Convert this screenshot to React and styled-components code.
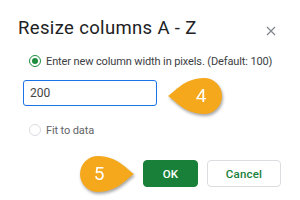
import React from "react";
import styled, { createGlobalStyle } from "styled-components";

const GlobalStyle = createGlobalStyle`
  html, body {
    margin: 0;
    padding: 0;
    background: #fff;
  }
  body {
    font-family: Roboto, "Liberation Sans", Arial, sans-serif;
    -webkit-font-smoothing: antialiased;
  }
`;

// ----- Dialog -----
const Dialog = styled.div`
  position: relative;
  width: 300px;
  height: 200px;
  box-sizing: border-box;
  padding: 16px 19px 0 18px;
  background: #fff;
  overflow: hidden;
`;

const TitleRow = styled.div`
  display: flex;
  align-items: center;
  justify-content: space-between;
  height: 24px;
`;
const Title = styled.h2`
  margin: 0;
  font-size: 18.5px;
  line-height: 24px;
  font-weight: 400;
  color: #202124;
  letter-spacing: 0.35px;
`;
const CloseBtn = styled.button`
  width: 20px;
  height: 20px;
  margin-top: 6px;
  padding: 0;
  border: 0;
  background: transparent;
  display: flex;
  align-items: center;
  justify-content: center;
  color: #5f6368;
  cursor: pointer;
`;

// ----- Options -----
const Options = styled.div`
  display: flex;
  flex-direction: column;
  padding-left: 5px;
  margin-top: 11px;
`;
const OptionRow = styled.label`
  display: flex;
  align-items: center;
  gap: 5px;
  height: 20px;
  padding-left: 6px;
  font-size: 11px;
  letter-spacing: -0.12px;
  color: ${({ muted }) => (muted ? "#5f6368" : "#3c4043")};
  margin-top: ${({ gap }) => gap || 0}px;
`;
const Radio = styled.span`
  box-sizing: border-box;
  width: 12px;
  height: 12px;
  border-radius: 50%;
  border: 1.5px solid ${({ checked }) => (checked ? "#1e8e3e" : "#dadce0")};
  display: flex;
  align-items: center;
  justify-content: center;
  &::after {
    content: "";
    width: 6px;
    height: 6px;
    border-radius: 50%;
    background: ${({ checked }) => (checked ? "#1e8e3e" : "transparent")};
  }
`;
const WidthInput = styled.input`
  box-sizing: border-box;
  width: 134px;
  height: 26px;
  margin-top: 9px;
  padding: 0 6px;
  border: 1.5px solid #1a73e8;
  border-radius: 3px;
  font-family: inherit;
  font-size: 12px;
  color: #444;
  outline: none;
`;

// ----- Buttons -----
const Actions = styled.div`
  display: flex;
  justify-content: flex-end;
  gap: 9px;
  margin-top: 20px;
`;
const Button = styled.button`
  box-sizing: border-box;
  height: 27px;
  width: ${({ w }) => w}px;
  border-radius: 4px;
  font-family: inherit;
  font-size: 11.5px;
  font-weight: 500;
  letter-spacing: 0.2px;
  cursor: pointer;
  border: 1px solid ${({ primary }) => (primary ? "#188038" : "#dadce0")};
  background: ${({ primary }) => (primary ? "#188038" : "#fff")};
  color: ${({ primary }) => (primary ? "#fff" : "#188038")};
`;

// ----- Callouts (annotations drawn over the dialog) -----
const Callout = styled.div`
  position: absolute;
  left: ${({ x }) => x}px;
  top: ${({ y }) => y}px;
  width: 60px;
  height: 40px;
  filter: drop-shadow(1px 2px 1.5px rgba(0, 0, 0, 0.35));
  svg {
    position: absolute;
    inset: 0;
  }
`;
const CalloutNum = styled.span`
  position: absolute;
  top: 0;
  left: ${({ cx }) => cx - 12}px;
  width: 24px;
  height: 40px;
  line-height: 40px;
  text-align: center;
  font-size: 19px;
  color: #fff;
`;

const DROP_LEFT =
  "M2 20 C10 15 17 3 38 2 A18 18 0 1 1 38 38 C17 37 10 25 2 20 Z";
const DROP_RIGHT =
  "M58 20 C50 15 43 3 22 2 A18 18 0 1 0 22 38 C43 37 50 25 58 20 Z";

const App = () => {
  return (
    <>
      <GlobalStyle />
      <Dialog>
        <TitleRow>
          <Title>Resize columns A - Z</Title>
          <CloseBtn aria-label="Close">
            <svg width="10" height="10" viewBox="0 0 10 10">
              <path
                d="M1 1 L9 9 M9 1 L1 9"
                stroke="#80868b"
                strokeWidth="1.2"
                fill="none"
              />
            </svg>
          </CloseBtn>
        </TitleRow>

        <Options>
          <OptionRow>
            <Radio checked />
            Enter new column width in pixels. (Default: 100)
          </OptionRow>
          <WidthInput defaultValue="200" />
          <OptionRow muted gap={14}>
            <Radio />
            Fit to data
          </OptionRow>
        </Options>

        <Actions>
          <Button primary w={55}>
            OK
          </Button>
          <Button w={74}>Cancel</Button>
        </Actions>

        <Callout x={166} y={76}>
          <svg width="60" height="40" viewBox="0 0 60 40">
            <path d={DROP_LEFT} fill="#f5a81c" />
          </svg>
          <CalloutNum cx={35}>4</CalloutNum>
        </Callout>

        <Callout x={76} y={154}>
          <svg width="60" height="40" viewBox="0 0 60 40">
            <path d={DROP_RIGHT} fill="#f5a81c" />
          </svg>
          <CalloutNum cx={23}>5</CalloutNum>
        </Callout>
      </Dialog>
    </>
  );
};

export default App;
